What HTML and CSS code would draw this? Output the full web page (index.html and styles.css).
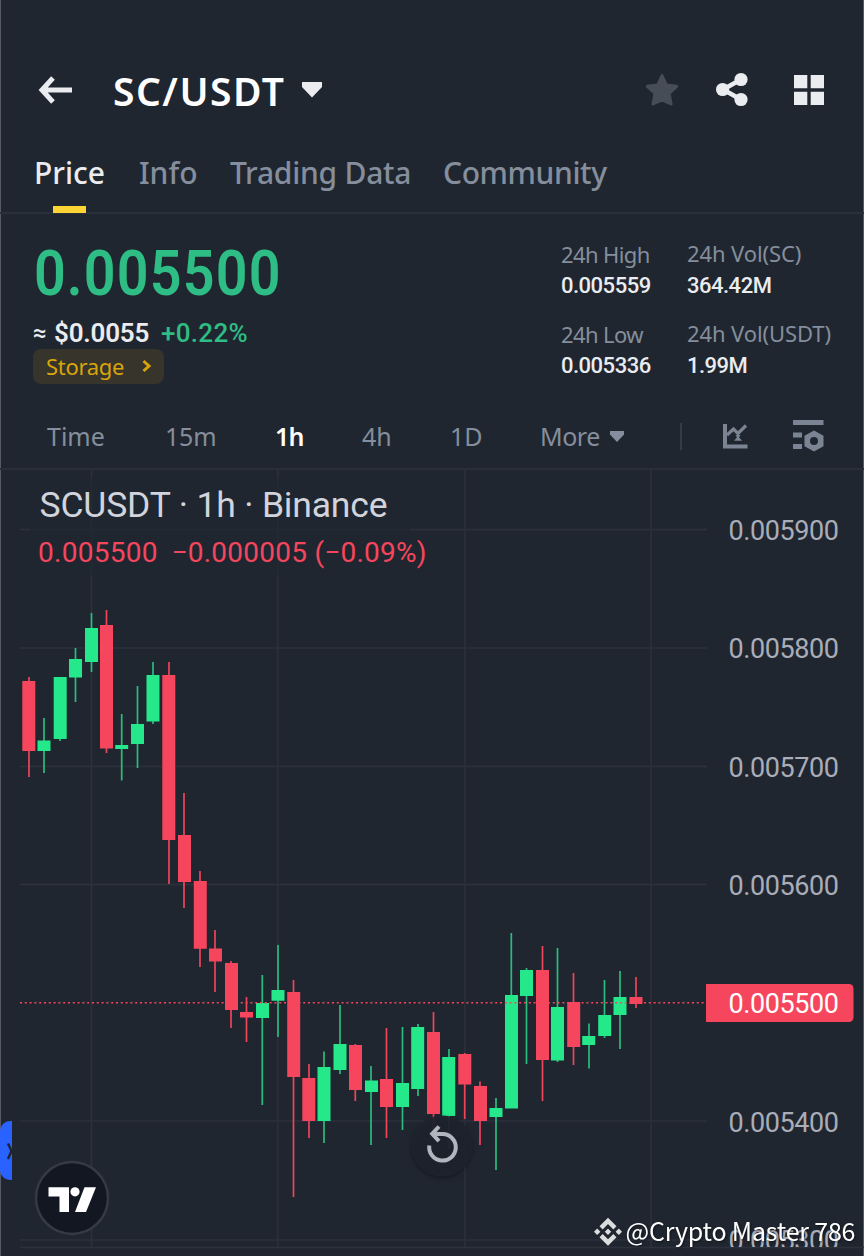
FILE: index.html
```html
<!DOCTYPE html>
<html lang="en">
<head>
<meta charset="utf-8">
<title>SC/USDT</title>
<link rel="stylesheet" href="styles.css">
</head>
<body>
<main class="app">
  <header class="topbar">
    <svg class="back" width="36" height="30" viewBox="0 0 36 30"><path d="M15 3 4 15l11 12M4 15h30" fill="none" stroke="#eaecef" stroke-width="5"/></svg>
    <h1 class="pair">SC/USDT</h1>
    <svg class="caret" width="22" height="16" viewBox="0 0 22 16"><path d="M1 0h20v5L11 15.500 1 5z" fill="#eaecef"/></svg>
    <div class="actions">
      <svg width="34" height="36" viewBox="0 0 34 36"><path d="M17 3l4.300 9.500 10.400 1.300-7.600 7.200 2 10.500L17 27.300 8 31.500l2-10.500L2.300 13.800l10.400-1.300z" fill="#474d57" stroke="#474d57" stroke-width="3" stroke-linejoin="round" transform="translate(0 .5)"/></svg>
      <svg width="34" height="36" viewBox="0 0 34 36"><path d="M25 7.500 7 17.500l18 10" fill="none" stroke="#eaecef" stroke-width="4.500"/><g fill="#eaecef"><circle cx="25" cy="7.500" r="6.600"/><circle cx="6.600" cy="17.500" r="6.600"/><circle cx="25" cy="27.500" r="6.600"/></g></svg>
      <svg width="30" height="30" viewBox="0 0 30 30"><path d="M0 0h13.300v13.300H0zM16.700 0H30v13.300H16.700zM0 16.700h13.300V30H0zM16.700 16.700H30V30H16.700z" fill="#eaecef"/></svg>
    </div>
  </header>

  <nav class="tabs">
    <span class="tab tab-price active">Price</span>
    <span class="tab tab-info">Info</span>
    <span class="tab tab-data">Trading Data</span>
    <span class="tab tab-community">Community</span>
  </nav>

  <section class="summary">
    <div class="quote">
      <div class="price">0.005500</div>
      <div class="fiat"><span class="approx">≈</span><span class="usd">$0.0055</span><span class="change">+0.22%</span></div>
      <div class="tag"><span>Storage</span><svg width="10" height="14" viewBox="0 0 10 14"><path d="M1.500 2 7 7l-5.500 5" fill="none" stroke="#d9a50c" stroke-width="3"/></svg></div>
    </div>
    <div class="stats">
      <div class="col">
        <div class="stat"><span class="label tight">24h High</span><span class="value">0.005559</span></div>
        <div class="stat"><span class="label tight">24h Low</span><span class="value">0.005336</span></div>
      </div>
      <div class="col col-vol">
        <div class="stat"><span class="label">24h Vol(SC)</span><span class="value">364.42M</span></div>
        <div class="stat"><span class="label">24h Vol(USDT)</span><span class="value">1.99M</span></div>
      </div>
    </div>
  </section>

  <nav class="intervals">
    <span class="iv iv-time">Time</span>
    <span class="iv iv-15m">15m</span>
    <span class="iv iv-1h active">1h</span>
    <span class="iv iv-4h">4h</span>
    <span class="iv iv-1d">1D</span>
    <span class="iv iv-more">More</span>
    <svg class="more-caret" width="14" height="11" viewBox="0 0 14 11"><path d="M0 0h14v3.500L7 11 0 3.500z" fill="#848e9c"/></svg>
    <i class="divider"></i>
    <svg class="chart-icon" width="25" height="26" viewBox="0 0 25 26"><path d="M2 1v22.500h22.500" fill="none" stroke="#7b8492" stroke-width="4"/><path d="M4 12l6.500-6 4.500 4.500L23 2.500" fill="none" stroke="#7b8492" stroke-width="3.200"/><path d="M12.500 12h5l-1.500 2.300 3 3.500h-8l3-3.500z" fill="#7b8492"/></svg>
    <svg class="set-icon" width="31" height="32" viewBox="0 0 31 32"><path d="M0 0h30.500v5H0zM0 12.500h9v5H0zM0 24h9v5H0z" fill="#7b8492"/><path fill-rule="evenodd" d="M21 10.500l9.500 5.300v10.400L21 31.500l-9.500-5.300V15.800zM21 17a4 4 0 1 0 0 8 4 4 0 0 0 0-8z" fill="#7b8492"/></svg>
  </nav>

  <section class="chart">
    <svg class="plot" width="864" height="786" viewBox="0 470 864 786">
      <g class="grid">
        <path d="M91.500 470v778M277.800 470v778M464.800 470v778M651 470v778"/>
        <path d="M20 529.500h687M20 648h687M20 766.500h687M20 884.500h687M20 1121h687M20 1240h687"/>
        <path d="M20 1247.500h844"/>
      </g>
      <rect class="legend-bg" x="30" y="478" width="380" height="98"/>
      <path class="wick up" d="M44 718v55M60 677v64M75.500 648v54M91.500 613v59M121.700 714v66.500M137.500 686v82M153 662v62M262.300 975v130M278 945v92M324 1051.500v91.500M340 1005v69M371 1066v79M402.500 1027v103M418 1024v72M449 1049v100M496 1098v72M511.300 933v175M526.500 968v96M557.500 948v114M589 1023.500v45M604.500 980v58M620 971v78"/>
      <path class="wick down" d="M29 677v100M106.500 610v143M169 662v222M184 793v115M200 871v96M215 930v62M231 961v67M246.500 997v45M293.500 980v217M309 1064v74M355.300 1044v57M386.500 1028v110M433.500 1012v118M464.700 1053v66M480 1081.500v63.500M542.500 946v155M573.500 973v92M636 977v31"/>
      <path class="body up" d="M37.500 740.500h13V751h-13zM53.700 677h13v62h-13zM69 659h13v18.500H69zM85 628h13v34H85zM115.200 745h13v4h-13zM131 724h13v20h-13zM146.500 675h13v46.500h-13zM256 1003h13v15h-13zM271.500 990h13v10.700h-13zM317.500 1067h13v54h-13zM333.500 1044h13v26h-13zM365 1080.500h13V1092h-13zM396 1083h13v24h-13zM411.200 1027h13v62h-13zM442.200 1057h13v59h-13zM489.500 1108h13v9h-13zM505 995h13v113.500h-13zM520 970h13v26h-13zM551 1007h13v53.500h-13zM582.200 1036h13v9h-13zM598.200 1015h13v21h-13zM613.500 997h13v18h-13z"/>
      <path class="body down" d="M22.300 681h13v70h-13zM100 625h13v123.500h-13zM162.300 675h13v165h-13zM178 835h13v47h-13zM193.800 881h13v67.700h-13zM209 948.500h13v13h-13zM225 963h13v47h-13zM240 1012h13v5.500h-13zM287.200 992h13v85h-13zM302.300 1078h13v43h-13zM349 1045h13v45h-13zM380 1079h13v28h-13zM427 1032h13v82h-13zM458.300 1054h13v30.500h-13zM474 1086h13v35h-13zM536 970h13v90h-13zM567.200 1002h13v45h-13zM629.500 997h13v7h-13z"/>
      <path class="last-line" d="M20 1002.700h686"/>
      <g class="axis">
        <text x="728.500" y="540" textLength="110.500">0.005900</text>
        <text x="728.500" y="658" textLength="110.500">0.005800</text>
        <text x="728.500" y="776.500" textLength="110.500">0.005700</text>
        <text x="728.500" y="895" textLength="110.500">0.005600</text>
        <text x="728.500" y="1131.500" textLength="110.500">0.005400</text>
        <svg x="700" y="1200" width="164" height="47" viewBox="700 1200 164 47"><text x="728.500" y="1249.500" textLength="110.500">0.005300</text></svg>
      </g>
      <path d="M706 984h143a4.500 4.500 0 0 1 4.500 4.500v29a4.500 4.500 0 0 1-4.500 4.500H706z" fill="#f6465d"/>
      <text class="last-price" x="728.500" y="1012.500" textLength="110.500">0.005500</text>
      <text class="symbol" x="39.500" y="516.500" textLength="348">SCUSDT · 1h · Binance</text>
      <text class="delta" x="38" y="562" textLength="119.500">0.005500</text>
      <text class="delta" x="171.500" y="562" textLength="255">−0.000005 (−0.09%)</text>

      <circle class="reset" cx="442" cy="1146" r="30.500"/>
      <path d="M429.300 1145.500a13.300 13.300 0 1 0 13.500-11.500H433M439 1126.500l-6.800 7.300 6.800 7.300" fill="none" stroke="#b2b5be" stroke-width="4"/>

      <path d="M12 1121h-2a10 10 0 0 0-10 10v39a10 10 0 0 0 10 10h2z" fill="#2962ff"/>
      <path d="M8 1143.500l3.500 7.500-3.500 8" fill="none" stroke="#1e2530" stroke-width="2.500"/>

      <circle cx="72" cy="1198" r="36" fill="#131722" stroke="#363a45" stroke-width="2.500"/>
      <path d="M48.500 1187.300H69V1212h-9.500v-15.500h-11zM84.500 1187.300H96L86 1212H75z" fill="#fff"/><circle cx="75" cy="1191.800" r="4.600" fill="#fff"/>

      <g transform="translate(608 1231.700)" fill="#dcdddd"><path d="M0-14 8.500-5.500 5.300-2.300 0-7.600l-5.300 5.300-3.200-3.200zM0 14 8.500 5.500 5.300 2.300 0 7.600l-5.300-5.300-3.200 3.200zM0-3.200 3.200 0 0 3.200-3.200 0zM-10.800-3.200-7.600 0l-3.200 3.200L-14 0zM10.800-3.200 14 0l-3.200 3.200L7.600 0z"/></g>
      <text class="mark" x="625.500" y="1241" textLength="230">@Crypto Master 786</text>
    </svg>
  </section>
</main>
</body>
</html>
```
FILE: styles.css
```css
* { box-sizing: border-box; }
body { margin: 0; background: #202630; font-family: "Noto Sans", Roboto, sans-serif; }
.app { width: 864px; height: 1256px; overflow: hidden; background: #202630; box-shadow: inset 1px 0 #555a66, inset -1px 0 #555a66; }
.app svg { display: block; flex: none; }

.topbar { display: flex; align-items: center; height: 134px; padding: 45px 40px 0 38px; }
.pair { margin: 0 0 0 39px; padding-top: 2px; width: 172px; white-space: nowrap; font-size: 39px; line-height: 50px; font-weight: 600; letter-spacing: 1.5px; color: #fff; }
.caret { margin-left: 16px; }
.actions { display: flex; align-items: center; gap: 44px; margin-left: auto; }
.actions svg:nth-child(2) { margin-left: -7px; }

.tabs { display: flex; height: 80px; padding-left: 34px; border-bottom: 2px solid #2a303b; }
.tab { position: relative; white-space: nowrap; line-height: 78px; font-size: 30px; font-weight: 500; color: #848e9c; }
.tab-info { width: 91px; margin-left: 1px; letter-spacing: 0; }
.tab-data { width: 213px; letter-spacing: -.25px; }
.tab-community { letter-spacing: -.4px; }
.tab.active { color: #eaecef; width: 71px; margin-right: 33px; }
.tab.active::after { content: ""; position: absolute; left: 19px; top: 72px; width: 33px; height: 7px; background: #fcd535; }

.summary { display: flex; height: 190px; padding: 25px 0 0 33px; }
.quote { width: 528px; }
.price { height: 69px; line-height: 69px; font-family: Roboto, sans-serif; font-weight: 600; font-size: 63px; letter-spacing: 1.3px; color: #2ebd85; transform: scaleX(.884); transform-origin: 0 0; white-space: nowrap; padding-left: 1px; }
.fiat { display: flex; align-items: center; height: 41px; padding-top: 8px; font-family: Roboto, sans-serif; font-size: 26px; font-weight: 500; }
.approx { width: 21px; font-size: 24px; color: #eaecef; }
.usd { width: 107px; font-weight: 600; letter-spacing: -.2px; color: #eaecef; }
.change { letter-spacing: .3px; color: #2ebd85; }
.tag { display: flex; align-items: center; justify-content: space-between; width: 131px; height: 35px; padding: 0 12px 1px 13px; border-radius: 8px; background: #37342b; color: #d9a50c; font-size: 22px; letter-spacing: -.3px; }
.stats { display: flex; }
.col { width: 126px; }
.col-vol { width: 170px; }
.stat { display: flex; flex-direction: column; height: 80px; white-space: nowrap; }
.label { height: 31px; line-height: 29px; font-size: 22px; letter-spacing: -.1px; color: #848e9c; }
.label.tight { line-height: 30px; letter-spacing: -.6px; }
.value { height: 31px; line-height: 32px; font-family: Roboto, sans-serif; font-size: 22px; font-weight: 500; letter-spacing: -.5px; color: #eaecef; }

.intervals { display: flex; align-items: center; height: 66px; padding-left: 47px; border-bottom: 2px solid #2a2e39; font-size: 25px; color: #848e9c; }
.iv { white-space: nowrap; line-height: 30px; }
.iv-time { width: 118px; }
.iv-15m { width: 110px; letter-spacing: -.2px; }
.iv-1h { width: 87px; }
.iv-4h { width: 88px; }
.iv-1d { width: 91px; }
.iv-more { width: 69px; margin-left: -1px; margin-right: 1px; letter-spacing: -.5px; }
.iv.active { color: #fff; font-weight: 600; letter-spacing: -.8px; }
.divider { width: 2px; height: 27px; margin-left: 56px; background: #353b47; }
.chart-icon { margin-left: 41px; }
.set-icon { margin-left: 45px; }

.chart { height: 786px; }
.plot { font-family: Roboto, sans-serif; }
.grid { fill: none; stroke: #2c313c; stroke-width: 1.5; }
.legend-bg { fill: #202630; opacity: .6; }
.wick { fill: none; stroke-width: 1.7; }
.wick.up { stroke: #2abd7d; }
.wick.down { stroke: #f0445b; }
.body.up { fill: #25e88b; }
.body.down { fill: #f6465d; }
.last-line { stroke: #f6465d; stroke-width: 1.6; stroke-dasharray: 2 2.8; }
.axis { fill: #a9adb8; font-size: 27px; }
.last-price { fill: #fff; font-size: 27px; }
.symbol { fill: #d1d4dc; font-size: 35.5px; }
.delta { fill: #f6465d; font-size: 28px; }
.reset { fill: #1f232e; fill-opacity: .9; filter: drop-shadow(0 2px 2px rgba(10, 13, 20, .6)); }
.mark { fill: #fff; font-family: "Noto Sans CJK SC", "Noto Sans", sans-serif; font-size: 25px; filter: drop-shadow(1px 1px 1px rgba(0, 0, 0, .5)); }
```
